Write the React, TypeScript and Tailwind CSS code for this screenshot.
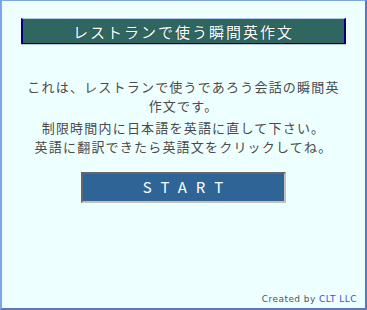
export default function App() {
  const jp = { fontFamily: '"Noto Sans CJK JP", "Noto Sans", sans-serif' };

  return (
    <div
      className="relative h-[310px] w-[367px] border-t border-l-2 border-r-2 border-b-2 border-t-[#7aa6f0] border-l-[#7aa6f0] border-r-[#5b79b8] border-b-[#5b79b8] bg-[#eeffff]"
      style={jp}
    >
      <div className="flex flex-col items-center px-[19px] pt-[17px]">
        <div className="flex h-[26px] w-[325px] items-center justify-center border-x-2 border-b border-t border-x-[#00007f] border-b-[#00007f] border-t-[#b8c8f0] bg-[#2f6660] shadow-[0_1px_0_#b8c8f0]">
          <span className="text-[15px] leading-none tracking-[2px] text-white [text-shadow:0_0_1px_#1a3030]">
            レストランで使う瞬間英作文
          </span>
        </div>

        <div className="mt-[33px] w-[325px] text-center text-[13px] leading-[19px] tracking-[1.2px] text-[#4a4a4a]">
          <p>これは、レストランで使うであろう会話の瞬間英作文です。</p>
          <p className="mt-[3px]">制限時間内に日本語を英語に直して下さい。</p>
          <p>英語に翻訳できたら英語文をクリックしてね。</p>
        </div>

        <button className="mt-[16px] flex h-[31px] w-[205px] items-center justify-center border-2 border-t-[#666666] border-l-[#666666] border-r-[#c0c0c0] border-b-[#c0c0c0] bg-[#2f6496] pl-[8px] text-[15px] tracking-[9px] text-white">
          START
        </button>
      </div>

      <div
        className="absolute bottom-[3px] right-[8px] text-[9px] leading-[12px] tracking-[0.45px] text-[#555555]"
        style={{ fontFamily: '"DejaVu Sans", sans-serif' }}
      >
        Created by <span className="text-[#4a4ad8]">CLT LLC</span>
      </div>
    </div>
  );
}
